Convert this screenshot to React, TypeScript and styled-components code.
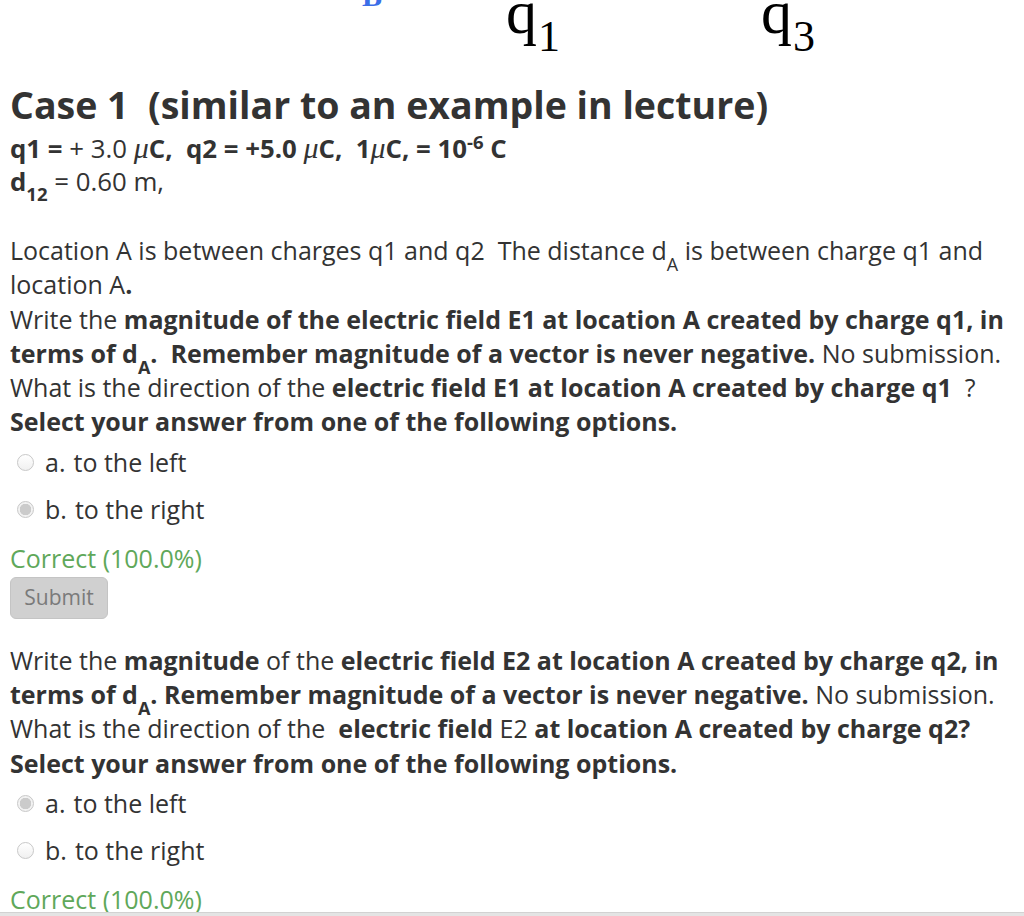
import React from 'react';
import styled, { createGlobalStyle } from 'styled-components';

const GlobalStyle = createGlobalStyle`
  html, body {
    margin: 0;
    padding: 0;
    background: #fff;
  }
  body {
    font-family: "Open Sans", "Liberation Sans", sans-serif;
    color: #333;
  }
`;

const Page = styled.div`
  width: 1024px;
  height: 916px;
  overflow: hidden;
  position: relative;
  box-sizing: border-box;
  padding: 0 10px;
`;

// cropped piece of the charge diagram above the question
const Figure = styled.div`
  position: relative;
  height: 82px;
  margin: 0 -10px;
  overflow: hidden;
`;

const Charge = styled.span<{ left: number }>`
  position: absolute;
  left: ${p => p.left}px;
  top: -19px;
  font-family: "Liberation Serif", "DejaVu Serif", serif;
  font-size: 62px;
  color: #000;
  line-height: 1;
  white-space: nowrap;

  sub {
    font-size: 44px;
    line-height: 0;
    vertical-align: -18px;
    margin-left: 1px;
  }
`;

const PointLabel = styled.span`
  position: absolute;
  left: 362px;
  top: -19px;
  font-family: "Liberation Serif", serif;
  font-weight: bold;
  font-size: 30px;
  line-height: 1;
  color: #3b6ee8;
`;

const Title = styled.h2`
  margin: 0 0 4px;
  font-size: 37.5px;
  font-weight: 700;
  line-height: 45px;
  white-space: pre;
`;

const Params = styled.p`
  margin: 0 0 35px;
  font-size: 25.8px;
  line-height: 33px;
  white-space: pre;
`;

const Text = styled.p`
  margin: 0;
  font-size: 25px;
  line-height: 34.3px;
  white-space: nowrap;

  b {
    font-weight: 700;
  }
`;

const Mu = styled.i`
  font-family: "Liberation Serif", serif;
  font-weight: normal;
  font-size: 30px;
`;

const Sub = styled.sub<{ drop?: number }>`
  font-size: 0.72em;
  line-height: 0;
  vertical-align: ${p => -(p.drop ?? 11)}px;
`;

const Sup = styled.sup`
  font-size: 0.72em;
  line-height: 0;
  vertical-align: 9px;
`;

const Options = styled.div`
  display: flex;
  flex-direction: column;
`;

const Option = styled.label`
  display: flex;
  align-items: center;
  height: 47px;
  font-size: 25px;
  padding-left: 7px;
`;

const Radio = styled.span<{ checked?: boolean }>`
  width: 17px;
  height: 17px;
  border-radius: 50%;
  box-sizing: border-box;
  border: 1px solid #c8c8c8;
  background: ${p =>
    p.checked
      ? 'radial-gradient(circle, #cbcbcb 0 5.5px, #f2f2f2 6px)'
      : 'linear-gradient(#fff, #f0f0f0)'};
  margin-right: 11px;
  flex-shrink: 0;
`;

const Letter = styled.span`
  margin-right: 8px;
`;

const Feedback = styled.div`
  color: #5fa85a;
  font-size: 25px;
  line-height: 34px;
  margin-top: 8px;
`;

const SubmitButton = styled.button`
  display: block;
  margin-top: 2px;
  width: 98px;
  height: 42px;
  border: 1px solid #c4c4c4;
  border-radius: 6px;
  background: #d0d0d0;
  color: #7a7a7a;
  font-family: "Open Sans", sans-serif;
  font-size: 21px;
  padding: 0 0 2px;
  cursor: default;
`;

const Question = styled.div<{ gap: number }>`
  margin-top: ${p => p.gap}px;
`;

const BottomRule = styled.div`
  position: absolute;
  left: 0;
  right: 0;
  top: 912px;
  height: 4px;
  background: #e4e4e4;
  border-top: 1px solid #d2d2d2;
`;

const App: React.FC = () => (
  <>
    <GlobalStyle />
    <Page>
      <Figure>
        <PointLabel>B</PointLabel>
        <Charge left={506}>q<sub>1</sub></Charge>
        <Charge left={761}>q<sub>3</sub></Charge>
      </Figure>

      <Title>{'Case 1  (similar to an example in lecture)'}</Title>
      <Params>
        <b>q1 = </b>+ 3.0 <Mu>μ</Mu><b>C,  q2 = +5.0 </b><Mu>μ</Mu><b>C,  1</b><Mu>μ</Mu>
        <b>C, = 10<Sup>-6</Sup> C</b>
        <br />
        <b>d<Sub drop={10}>12</Sub></b> = 0.60 m,
      </Params>

      <Question gap={0}>
        <Text>
          Location A is between charges q1 and q2&nbsp; The distance d<Sub>A</Sub> is between charge q1 and
          <br />
          location A<b>.</b>
          <br />
          Write the <b>magnitude of the electric field E1 at location A created by charge q1, in</b>
          <br />
          <b>terms of d<Sub>A</Sub>.&nbsp; Remember magnitude of a vector is never negative.</b> No submission.
          <br />
          What is the direction of the <b>electric field E1 at location A created by charge q1</b>&nbsp; ?
          <br />
          <b>Select your answer from one of the following options.</b>
        </Text>
        <Options>
          <Option><Radio /><Letter>a.</Letter>to the left</Option>
          <Option><Radio checked /><Letter>b.</Letter>to the right</Option>
        </Options>
        <Feedback>Correct (100.0%)</Feedback>
        <SubmitButton>Submit</SubmitButton>
      </Question>

      <Question gap={24}>
        <Text>
          Write the <b>magnitude</b> of the <b>electric field E2 at location A created by charge q2, in</b>
          <br />
          <b>terms of d<Sub>A</Sub>. Remember magnitude of a vector is never negative.</b> No submission.
          <br />
          What is the direction of the&nbsp; <b>electric field</b> E2 <b>at location A created by charge q2?</b>
          <br />
          <b>Select your answer from one of the following options.</b>
        </Text>
        <Options>
          <Option><Radio checked /><Letter>a.</Letter>to the left</Option>
          <Option><Radio /><Letter>b.</Letter>to the right</Option>
        </Options>
        <Feedback>Correct (100.0%)</Feedback>
      </Question>
      <BottomRule />
    </Page>
  </>
);

export default App;
